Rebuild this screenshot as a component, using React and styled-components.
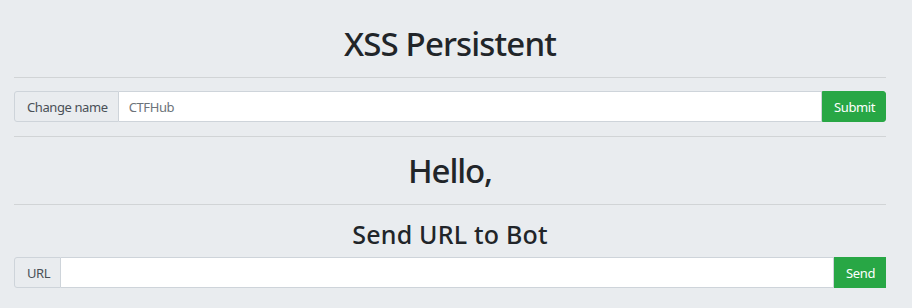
import React from 'react';
import styled, { createGlobalStyle } from 'styled-components';

const GlobalStyle = createGlobalStyle`
	html, body {
		margin: 0;
		padding: 0;
		background-color: #e9ecef;
	}
	body {
		font-family: 'Noto Sans', 'Open Sans', sans-serif;
		color: #212529;
	}
	* {
		box-sizing: border-box;
	}
`;

const Page = styled.div`
	padding: 0 26px 0 14px;
	height: 308px;
	display: flex;
	flex-direction: column;
`;
const Heading = styled.div`
	margin: ${(props) => props.margin || '0'};
	font-size: ${(props) => props.size}px;
	line-height: ${(props) => props.lineHeight}px;
	font-weight: 500;
	text-align: center;
	letter-spacing: ${(props) => props.spacing || 0}px;
`;
const Rule = styled.hr`
	margin: 0;
	border: 0;
	border-top: 1px solid rgba(0, 0, 0, 0.1);
`;
const InputGroup = styled.div`
	display: flex;
	height: 31px;
	margin: ${(props) => props.margin || '0'};
	font-size: 13px;
	letter-spacing: -0.4px;
`;
const Prepend = styled.span`
	display: flex;
	align-items: center;
	padding: 0 10px 0 12px;
	background-color: #e9ecef;
	border: 1px solid #ced4da;
	border-radius: 3px 0 0 3px;
	color: #495057;
	white-space: nowrap;
`;
const Field = styled.input`
	flex: 1;
	min-width: 0;
	height: 100%;
	padding: 0 10px;
	border: 1px solid #ced4da;
	border-left: 0;
	background-color: #fff;
	color: #6c737a;
	font: inherit;
	letter-spacing: inherit;
	outline: none;
`;
const Button = styled.button`
	height: 100%;
	padding: 0 10px 0 11px;
	border: 1px solid #28a745;
	border-radius: ${(props) => (props.rounded ? '0 3px 3px 0' : '0')};
	background-color: #28a745;
	color: #fff;
	font: inherit;
	letter-spacing: inherit;
	cursor: pointer;
`;

export default function App() {
	return (
		<>
			<GlobalStyle />
			<Page>
				<Heading size={33} lineHeight={40} spacing={-0.85} margin='24px 0 13px'>
					XSS Persistent
				</Heading>
				<Rule />
				<InputGroup margin='13px 0 14px'>
					<Prepend>Change name</Prepend>
					<Field type='text' defaultValue='CTFHub' />
					<Button rounded>Submit</Button>
				</InputGroup>
				<Rule />
				<Heading size={33} lineHeight={40} spacing={-1.1} margin='14px 0 13px'>
					Hello,
				</Heading>
				<Rule />
				<Heading size={25} lineHeight={30} spacing={0.2} margin='14px 0 8px'>
					Send URL to Bot
				</Heading>
				<InputGroup>
					<Prepend>URL</Prepend>
					<Field type='text' />
					<Button>Send</Button>
				</InputGroup>
			</Page>
		</>
	);
}
